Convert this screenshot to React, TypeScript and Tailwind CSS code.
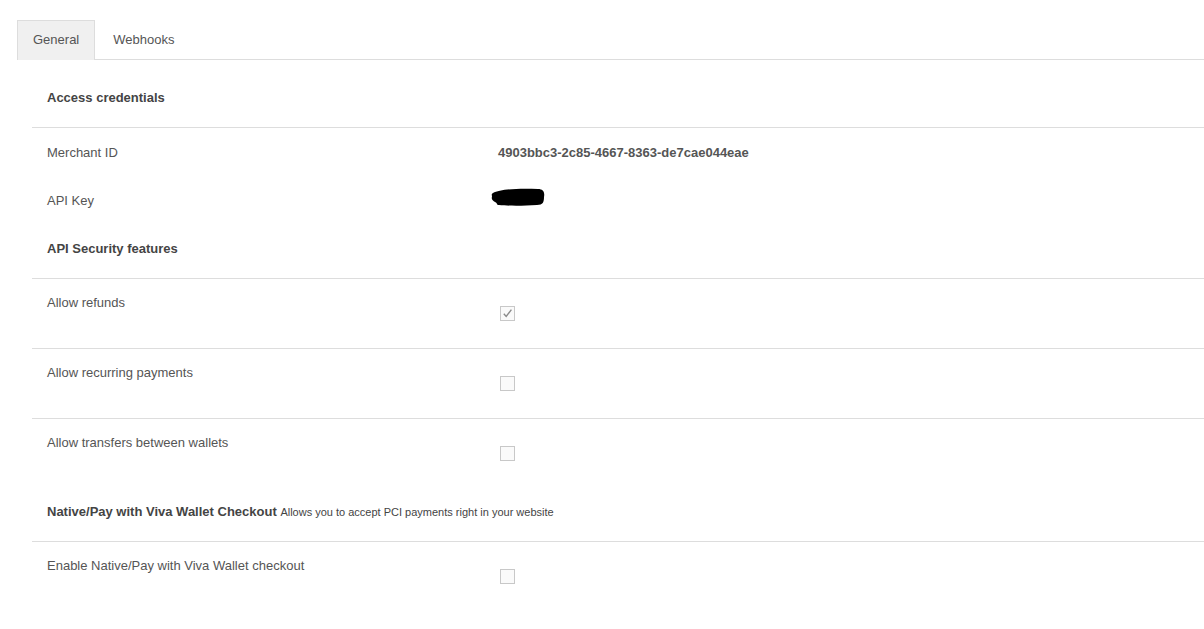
import React from "react";

const Check = ({ checked }: { checked?: boolean }) => (
  <span className="ml-[2px] flex h-[15px] w-[15px] items-center justify-center border border-[#c8c8c8] bg-[#fafafa]">
    {checked && (
      <svg width="11" height="11" viewBox="0 0 11 11">
        <path d="M1.8 5.8 L4.2 8.4 L9.4 1.6" fill="none" stroke="#8a8a8a" strokeWidth="1.4" />
      </svg>
    )}
  </span>
);

const Heading = ({ children, border = true, pt = "pt-[16px]" }: { children: React.ReactNode; border?: boolean; pt?: string }) => (
  <div className={`${pt} pb-[20px] pl-[15px] ${border ? "border-b border-[#dddddd]" : ""}`}>
    <div className="h-[18px] leading-[18px] text-[13px] font-bold text-[#444444]">{children}</div>
  </div>
);

const InfoRow = ({ label, children }: { label: string; children: React.ReactNode }) => (
  <div className="flex h-[48px]">
    <div className="w-[451px] pl-[15px] pt-[16px] leading-[18px] text-[13px] text-[#555555]">{label}</div>
    <div className="pl-[15px] pt-[16px] leading-[18px] text-[13px]">{children}</div>
  </div>
);

const CheckRow = ({ label, checked, border = true }: { label: string; checked?: boolean; border?: boolean }) => (
  <div className={`flex h-[70px] ${border ? "border-b border-[#dddddd]" : ""}`}>
    <div className="w-[451px] pl-[15px] pt-[15px] leading-[18px] text-[13px] text-[#555555]">{label}</div>
    <div className="pl-[15px] pt-[27px]">
      <Check checked={checked} />
    </div>
  </div>
);

export default function App() {
  return (
    <div className="min-h-[629px] w-[1204px] bg-white pl-[17px] pt-[20px]" style={{ fontFamily: '"Liberation Sans", Arial, sans-serif' }}>
      <div className="flex h-[40px] border-b border-[#dddddd]">
        <div className="flex h-[40px] items-center border-l border-r border-t border-[#dddddd] bg-[#f0f0f0] px-[15px] pb-[1px] text-[13px] text-[#555555]">
          General
        </div>
        <div className="flex h-[39px] items-center pl-[18px] text-[13px] text-[#555555]">Webhooks</div>
      </div>
      <div className="ml-[15px] pt-[13px]">
        <Heading>Access credentials</Heading>
        <div>
          <InfoRow label="Merchant ID">
            <span className="font-bold text-[#555555]">4903bbc3-2c85-4667-8363-de7cae044eae</span>
          </InfoRow>
          <InfoRow label="API Key">
            <span className="relative block h-[18px] w-[60px]">
              <svg className="absolute left-[-8px] top-[-5px]" width="56" height="22" viewBox="0 0 56 22">
                <path
                  d="M3 6 C10 2 30 1 48 2 C53 2 55 5 54 10 C54 15 53 18 47 18 C33 19 18 19 9 18 C6 18 8 16 5 15 C3 14 1 12 2 10 C2 8 1 7 3 6 Z"
                  fill="#000"
                />
              </svg>
            </span>
          </InfoRow>
        </div>
        <Heading>API Security features</Heading>
        <CheckRow label="Allow refunds" checked />
        <CheckRow label="Allow recurring payments" />
        <CheckRow label="Allow transfers between wallets" border={false} />
        <Heading pt="pt-[14px]">
          Native/Pay with Viva Wallet Checkout{" "}
          <span className="text-[11px] font-normal text-[#444444]">Allows you to accept PCI payments right in your website</span>
        </Heading>
        <CheckRow label="Enable Native/Pay with Viva Wallet checkout" border={false} />
      </div>
    </div>
  );
}
